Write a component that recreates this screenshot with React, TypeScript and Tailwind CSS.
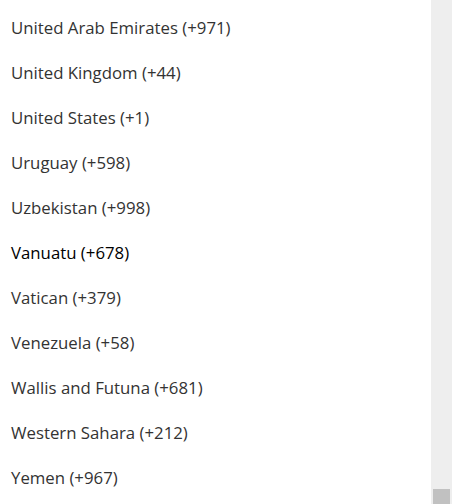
const countries = [
  'United Arab Emirates (+971)',
  'United Kingdom (+44)',
  'United States (+1)',
  'Uruguay (+598)',
  'Uzbekistan (+998)',
  'Vanuatu (+678)',
  'Vatican (+379)',
  'Venezuela (+58)',
  'Wallis and Futuna (+681)',
  'Western Sahara (+212)',
  'Yemen (+967)',
];

export default function App() {
  return (
    <div className="flex h-[504px] w-[452px] bg-white overflow-hidden">
      <ul className="flex-1 pt-[5px] font-['Open_Sans',sans-serif] text-[16.8px]">
        {countries.map((c) => (
          <li
            key={c}
            className={
              'h-[45px] flex items-center pl-[11px] ' +
              (c.startsWith('Vanuatu') ? 'text-black' : 'text-[#333333]')
            }
          >
            {c}
          </li>
        ))}
      </ul>
      <div className="w-[21px] bg-[#eeeeee] flex flex-col justify-end pl-[2px] pr-[2px]">
        <div className="h-[15px] bg-[#c1c1c1]" />
      </div>
    </div>
  );
}
